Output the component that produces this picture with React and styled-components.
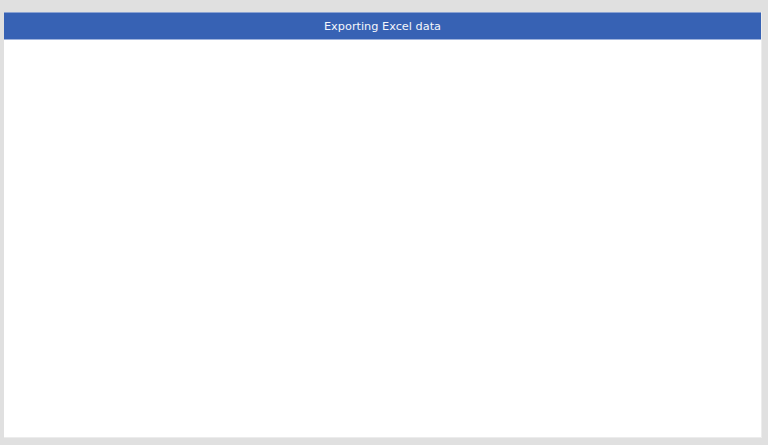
import React from 'react'
import styled, { createGlobalStyle } from 'styled-components'

const Global = createGlobalStyle`
  html, body {
    margin: 0;
    padding: 0;
    background: #e0e0e0;
  }
  #root {
    height: 445px;
  }
`

const Page = styled.div`
  height: 445px;
  box-sizing: border-box;
  padding: 12px 6px 7px 4px;
  display: flex;
`

const Panel = styled.div`
  flex: 1;
  display: flex;
  flex-direction: column;
  background: #ffffff;
  border-right: 1px solid #ececec;
  border-bottom: 1px solid #ececec;
`

const Header = styled.div`
  height: 28px;
  background: #3762b4;
  border-top: 1px solid #8aa2d2;
  border-bottom: 1px solid #9fb3dc;
  box-sizing: border-box;
  display: flex;
  align-items: center;
  justify-content: center;
  color: #f4f6fb;
  font-family: "DejaVu Sans", Verdana, sans-serif;
  font-size: 11.3px;
`

const Body = styled.div`
  flex: 1;
`

export default function App() {
  return (
    <>
      <Global />
      <Page>
        <Panel>
          <Header>Exporting Excel data</Header>
          <Body />
        </Panel>
      </Page>
    </>
  )
}
